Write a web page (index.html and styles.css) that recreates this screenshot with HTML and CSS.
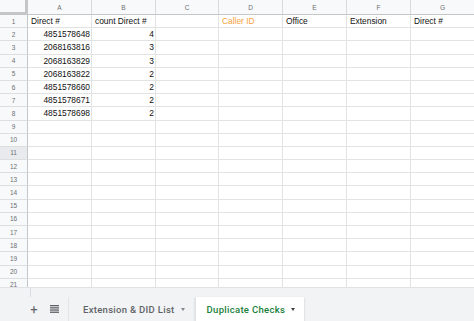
FILE: index.html
```html
<!DOCTYPE html>
<html>
<head>
<meta charset="utf-8">
<title>Duplicate Checks</title>
<link rel="stylesheet" href="styles.css">
</head>
<body>
<div class="sheet">
  <div class="grid">
    <div class="corner"></div>
    <div class="colhd">A</div><div class="colhd">B</div><div class="colhd">C</div><div class="colhd">D</div>
    <div class="colhd">E</div><div class="colhd">F</div><div class="colhd">G</div>

    <div class="rowhd">1</div><div class="cell">Direct #</div><div class="cell">count Direct #</div><div class="cell"></div>
    <div class="cell orange">Caller ID</div><div class="cell">Office</div><div class="cell">Extension</div><div class="cell">Direct #</div>

    <div class="rowhd">2</div><div class="cell num">4851578648</div><div class="cell num">4</div><div class="cell"></div><div class="cell"></div><div class="cell"></div><div class="cell"></div><div class="cell"></div>
    <div class="rowhd">3</div><div class="cell num">2068163816</div><div class="cell num">3</div><div class="cell"></div><div class="cell"></div><div class="cell"></div><div class="cell"></div><div class="cell"></div>
    <div class="rowhd">4</div><div class="cell num">2068163829</div><div class="cell num">3</div><div class="cell"></div><div class="cell"></div><div class="cell"></div><div class="cell"></div><div class="cell"></div>
    <div class="rowhd">5</div><div class="cell num">2068163822</div><div class="cell num">2</div><div class="cell"></div><div class="cell"></div><div class="cell"></div><div class="cell"></div><div class="cell"></div>
    <div class="rowhd">6</div><div class="cell num">4851578660</div><div class="cell num">2</div><div class="cell"></div><div class="cell"></div><div class="cell"></div><div class="cell"></div><div class="cell"></div>
    <div class="rowhd">7</div><div class="cell num">4851578671</div><div class="cell num">2</div><div class="cell"></div><div class="cell"></div><div class="cell"></div><div class="cell"></div><div class="cell"></div>
    <div class="rowhd">8</div><div class="cell num">4851578698</div><div class="cell num">2</div><div class="cell"></div><div class="cell"></div><div class="cell"></div><div class="cell"></div><div class="cell"></div>
    <div class="rowhd">9</div><div class="cell"></div><div class="cell"></div><div class="cell"></div><div class="cell"></div><div class="cell"></div><div class="cell"></div><div class="cell"></div>
    <div class="rowhd">10</div><div class="cell"></div><div class="cell"></div><div class="cell"></div><div class="cell"></div><div class="cell"></div><div class="cell"></div><div class="cell"></div>
    <div class="rowhd sel">11</div><div class="cell"></div><div class="cell"></div><div class="cell"></div><div class="cell"></div><div class="cell"></div><div class="cell"></div><div class="cell"></div>
    <div class="rowhd">12</div><div class="cell"></div><div class="cell"></div><div class="cell"></div><div class="cell"></div><div class="cell"></div><div class="cell"></div><div class="cell"></div>
    <div class="rowhd">13</div><div class="cell"></div><div class="cell"></div><div class="cell"></div><div class="cell"></div><div class="cell"></div><div class="cell"></div><div class="cell"></div>
    <div class="rowhd">14</div><div class="cell"></div><div class="cell"></div><div class="cell"></div><div class="cell"></div><div class="cell"></div><div class="cell"></div><div class="cell"></div>
    <div class="rowhd">15</div><div class="cell"></div><div class="cell"></div><div class="cell"></div><div class="cell"></div><div class="cell"></div><div class="cell"></div><div class="cell"></div>
    <div class="rowhd">16</div><div class="cell"></div><div class="cell"></div><div class="cell"></div><div class="cell"></div><div class="cell"></div><div class="cell"></div><div class="cell"></div>
    <div class="rowhd">17</div><div class="cell"></div><div class="cell"></div><div class="cell"></div><div class="cell"></div><div class="cell"></div><div class="cell"></div><div class="cell"></div>
    <div class="rowhd">18</div><div class="cell"></div><div class="cell"></div><div class="cell"></div><div class="cell"></div><div class="cell"></div><div class="cell"></div><div class="cell"></div>
    <div class="rowhd">19</div><div class="cell"></div><div class="cell"></div><div class="cell"></div><div class="cell"></div><div class="cell"></div><div class="cell"></div><div class="cell"></div>
    <div class="rowhd">20</div><div class="cell"></div><div class="cell"></div><div class="cell"></div><div class="cell"></div><div class="cell"></div><div class="cell"></div><div class="cell"></div>
    <div class="rowhd">21</div><div class="cell"></div><div class="cell"></div><div class="cell"></div><div class="cell"></div><div class="cell"></div><div class="cell"></div><div class="cell"></div>
  </div>
</div>
<div class="tabbar">
  <div class="scrollstrip"><span class="scrollmark"></span></div>
  <div class="tabs">
    <span class="tabicon plus">+</span>
    <span class="tabicon">
      <svg width="9" height="8" viewBox="0 0 9 8"><rect x="0" y="0" width="9" height="1.3" fill="#5f6368"/><rect x="0" y="2.2" width="9" height="1.3" fill="#5f6368"/><rect x="0" y="4.4" width="9" height="1.3" fill="#5f6368"/><rect x="0" y="6.6" width="9" height="1.3" fill="#5f6368"/></svg>
    </span>
    <div class="tab">Extension &amp; DID List <span class="caret"></span></div>
    <div class="tab active">Duplicate Checks <span class="caret"></span></div>
  </div>
</div>
</body>
</html>
```
FILE: styles.css
```css
body {
	margin: 0;
	width: 474px;
	height: 321px;
	overflow: hidden;
	background: #fff;
	font-family: "Liberation Sans", Arial, sans-serif;
}

.sheet {
	height: 287px;
	overflow: hidden;
}

.grid {
	display: grid;
	grid-template-columns: 28px 64px 64px 63px 64px 64px 64px 64px;
	grid-template-rows: 15px;
	grid-auto-rows: 13.2px;
	width: 500px;
}

.corner {
	background: #f8f9fa;
	border-right: 3px solid #c4c7c5;
	border-bottom: 3px solid #c4c7c5;
	box-sizing: border-box;
}

.colhd {
	background: #f8f9fa;
	border-right: 1px solid #d7d9db;
	border-bottom: 1px solid #c4c7c5;
	color: #6b6f73;
	font-size: 6.5px;
	display: flex;
	align-items: center;
	justify-content: center;
	box-sizing: border-box;
}

.rowhd {
	background: #f8f9fa;
	border-right: 1px solid #c4c7c5;
	border-bottom: 1px solid #dcdee0;
	color: #6b6f73;
	font-size: 6.5px;
	display: flex;
	align-items: center;
	justify-content: center;
	box-sizing: border-box;
}

.rowhd.sel {
	background: #e8eaed;
}

.cell {
	border-right: 1px solid #e2e3e3;
	border-bottom: 1px solid #e2e3e3;
	box-sizing: border-box;
	font-size: 8.4px;
	color: #111;
	padding: 0 3px;
	display: flex;
	align-items: center;
	white-space: nowrap;
	overflow: hidden;
}

.cell.num {
	justify-content: flex-end;
	padding-right: 1px;
}

.cell.orange {
	color: #f6a23c;
}

.tabbar {
	height: 34px;
	background: #f1f3f4;
	border-top: 1px solid #e0e2e4;
	box-sizing: border-box;
}

.scrollstrip {
	height: 9px;
	position: relative;
}

.scrollmark {
	position: absolute;
	left: 30px;
	top: 0;
	width: 1px;
	height: 9px;
	background: #dadce0;
}

.tabs {
	height: 24px;
	display: flex;
	align-items: stretch;
	font-family: "Roboto", "Open Sans", sans-serif;
	font-weight: 500;
	font-size: 9.5px;
	color: #5f6368;
	letter-spacing: 0.3px;
}

.tabicon {
	display: flex;
	align-items: center;
	justify-content: center;
	width: 20px;
	color: #5f6368;
}

.tabicon.plus {
	margin-left: 24px;
	font-size: 13px;
	font-weight: 400;
}

.tab {
	display: flex;
	align-items: center;
	padding: 0 8px 0 14px;
	margin-left: 4px;
	border-left: 1px solid #e3e5e7;
	gap: 6px;
}

.tab.active {
	background: #fff;
	color: #188038;
	margin-left: 2px;
	padding: 0 9px 0 11px;
	box-shadow: 0 1px 2px rgba(60, 64, 67, 0.25);
}

.caret {
	width: 0;
	height: 0;
	border-left: 2.5px solid transparent;
	border-right: 2.5px solid transparent;
	border-top: 3px solid #80868b;
}

.tab.active .caret {
	border-top-color: #3c4043;
}
```
